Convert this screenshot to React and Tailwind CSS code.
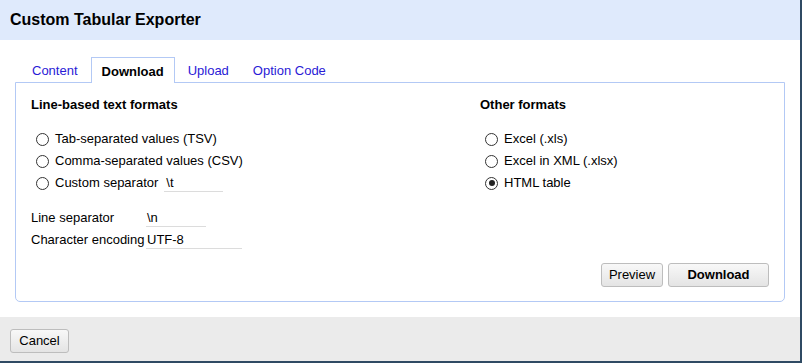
import React from "react";

function Radio({ checked }) {
  return (
    <span className="relative inline-block w-[13px] h-[13px] rounded-full border border-[#333] bg-white shrink-0">
      {checked && (
        <span className="absolute left-[2.5px] top-[2.5px] w-[6px] h-[6px] rounded-full bg-[#222]" />
      )}
    </span>
  );
}

function Btn({ children, bold, className = "" }) {
  return (
    <button
      className={`h-[24px] rounded-[3px] border border-[#bdbdbd] bg-gradient-to-b from-[#f8f8f8] to-[#e4e4e4] text-[13px] text-black ${bold ? "font-bold" : ""} ${className}`}
    >
      {children}
    </button>
  );
}

export default function App() {
  return (
    <div
      className="w-[802px] h-[363px] bg-[#2f4a63] overflow-hidden"
      style={{ fontFamily: '"Liberation Sans", Arial, sans-serif' }}
    >
      <div className="w-[800px] h-[361px] flex flex-col bg-white">
        <div className="h-[40px] bg-[#dfeafc] flex items-center pl-[10px]">
          <span className="text-[16px] font-bold text-black">Custom Tabular Exporter</span>
        </div>
        <div className="h-[277px] pl-[15px] pt-[17px]">
          <div className="flex pl-[7px] gap-[3px] h-[25px] text-[13px]">
            <div className="px-[10px] pt-[4px] text-[#2a1ad6]">Content</div>
            <div className="px-[10px] pt-[4px] border border-b-0 border-[#b3c9f5] bg-white relative z-10 h-[26px] font-bold text-black">Download</div>
            <div className="px-[10px] pt-[4px] text-[#2a1ad6]">Upload</div>
            <div className="px-[11px] pt-[4px] text-[#2a1ad6]">Option Code</div>
          </div>
          <div className="w-[770px] h-[220px] border border-[#b3c9f5] rounded-b-[5px] px-[15px] pt-[14px] text-[13px] text-black flex flex-col">
            <div className="flex">
              <div className="w-[449px]">
                <div className="font-bold h-[16px] leading-[16px]">Line-based text formats</div>
                <div className="mt-[15px] flex flex-col">
                  <div className="flex items-center h-[22px] pl-[5px]">
                    <Radio />
                    <span className="ml-[6px]">Tab-separated values (TSV)</span>
                  </div>
                  <div className="flex items-center h-[22px] pl-[5px]">
                    <Radio />
                    <span className="ml-[6px]">Comma-separated values (CSV)</span>
                  </div>
                  <div className="flex items-center h-[22px] pl-[5px]">
                    <Radio />
                    <span className="ml-[6px]">Custom separator</span>
                    <span className="ml-[6px] w-[59px] h-[18px] border-b border-[#dcdcdc] pl-[2px] leading-[17px]">\t</span>
                  </div>
                </div>
                <div className="mt-[13px] flex flex-col">
                  <div className="flex items-center h-[22px]">
                    <span className="w-[115px]">Line separator</span>
                    <span className="w-[60px] h-[18px] border-b border-[#dcdcdc] pl-[1px] leading-[17px]">\n</span>
                  </div>
                  <div className="flex items-center h-[22px]">
                    <span className="w-[115px]">Character encoding</span>
                    <span className="w-[96px] h-[18px] border-b border-[#dcdcdc] pl-[1px] leading-[17px]">UTF-8</span>
                  </div>
                </div>
              </div>
              <div>
                <div className="font-bold h-[16px] leading-[16px]">Other formats</div>
                <div className="mt-[15px] flex flex-col">
                  <div className="flex items-center h-[22px] pl-[5px]">
                    <Radio />
                    <span className="ml-[6px]">Excel (.xls)</span>
                  </div>
                  <div className="flex items-center h-[22px] pl-[5px]">
                    <Radio />
                    <span className="ml-[6px]">Excel in XML (.xlsx)</span>
                  </div>
                  <div className="flex items-center h-[22px] pl-[5px]">
                    <Radio checked />
                    <span className="ml-[6px]">HTML table</span>
                  </div>
                </div>
              </div>
            </div>
            <div className="mt-auto mb-[14px] flex justify-end gap-[5px]">
              <Btn className="w-[62px]">Preview</Btn>
              <Btn bold className="w-[101px]">Download</Btn>
            </div>
          </div>
        </div>
        <div className="flex-1 bg-[#ebebeb] pt-[11px] pl-[10px]">
          <Btn className="w-[59px]">Cancel</Btn>
        </div>
      </div>
    </div>
  );
}
